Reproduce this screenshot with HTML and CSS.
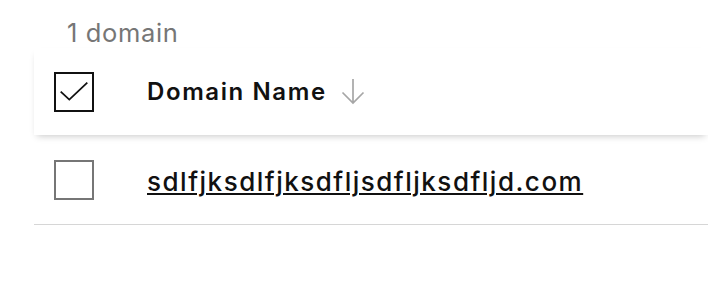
FILE: index.html
```html
<!DOCTYPE html>
<html>
<head>
<meta charset="utf-8">
<link rel="stylesheet" href="styles.css">
</head>
<body>
<div class="count">1 domain</div>
<div class="table">
  <div class="head">
    <span class="cb cb-checked">
      <svg width="36" height="36" viewBox="0 0 36 36"><path d="M4.7 17.7 L13.3 25.6 L31.3 8.7" fill="none" stroke="#111" stroke-width="1.8"/></svg>
    </span>
    <span class="col">Domain Name</span>
    <svg class="sort" width="24" height="27" viewBox="0 0 24 27"><path d="M12 1 V25 M1.5 14.5 L12 25 L22.5 14.5" fill="none" stroke="#a6a6a6" stroke-width="1.7"/></svg>
  </div>
  <div class="row">
    <span class="cb"></span>
    <a class="link" href="#">sdlfjksdlfjksdfljsdfljksdfljd.com</a>
  </div>
</div>
</body>
</html>
```

FILE: styles.css
```css
html, body { margin: 0; padding: 0; background: #fff; }
body { font-family: Inter, "Noto Sans", sans-serif; color: #111; }
.count {
  padding: 18px 0 0 67px;
  font-size: 25.5px;
  line-height: 30px;
  letter-spacing: 0.65px;
  color: #767676;
}
.table { margin-left: 34px; }
.head {
  display: flex;
  align-items: center;
  height: 87px;
  padding-left: 20px;
  box-shadow: 0 4px 7px -3px rgba(0,0,0,0.22);
  position: relative;
}
.cb {
  box-sizing: border-box;
  width: 40px;
  height: 40px;
  border: 2px solid #767676;
  display: block;
  flex: none;
}
.cb svg { display: block; }
.cb-checked { border-color: #111; }
.col {
  margin-left: 53px;
  font-size: 24px;
  line-height: 30px;
  font-weight: 600;
  letter-spacing: 1.6px;
}
.sort { margin-left: 14px; display: block; }
.row {
  display: flex;
  align-items: center;
  height: 89px;
  padding-left: 20px;
  border-bottom: 1px solid #d6d6d6;
}
.link {
  margin-left: 53px;
  margin-top: 5px;
  font-size: 26px;
  line-height: 30px;
  font-weight: 500;
  letter-spacing: 1.5px;
  color: #111;
  text-decoration: underline;
  text-decoration-thickness: 2px;
  text-underline-offset: 2px;
}
```
